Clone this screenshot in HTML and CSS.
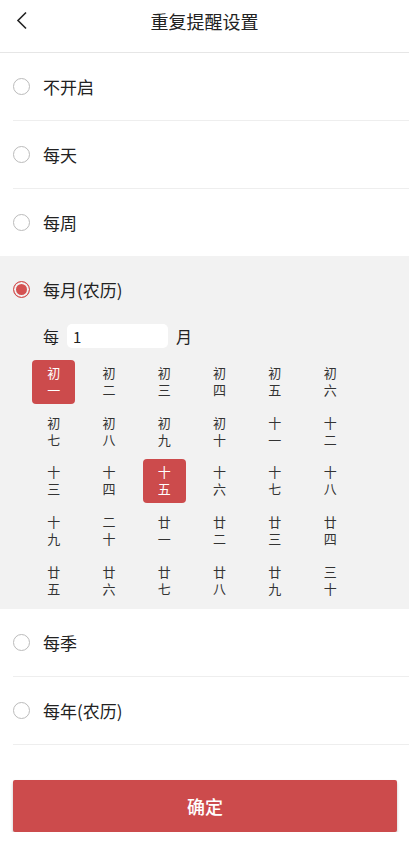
FILE: index.html
```html
<!DOCTYPE html>
<html lang="zh-CN">
<head>
    <meta charset="utf-8">
    <meta name="viewport" content="width=device-width, initial-scale=1">
    <title>重复提醒设置</title>
    <link rel="stylesheet" href="styles.css">
</head>
<body>
<header class="topbar">
    <a class="back" href="#">
        <svg width="14" height="20" viewBox="0 0 14 20"><path d="M10 1.5 L2 9.5 L10 17.5" fill="none" stroke="#222" stroke-width="1.6"/></svg>
    </a>
    <h1>重复提醒设置</h1>
</header>

<main>
    <ul class="options">
        <li class="opt"><span class="radio"></span>不开启</li>
        <li class="opt"><span class="radio"></span>每天</li>
        <li class="opt"><span class="radio"></span>每周</li>
        <li class="opt-open">
            <div class="opt"><span class="radio on"></span>每月(农历)</div>
            <div class="every">
                <span>每</span>
                <input class="num" value="1">
                <span>月</span>
            </div>
            <div class="days">
                <span class="day on"><i>初一</i></span>
                <span class="day"><i>初二</i></span>
                <span class="day"><i>初三</i></span>
                <span class="day"><i>初四</i></span>
                <span class="day"><i>初五</i></span>
                <span class="day"><i>初六</i></span>
                <span class="day"><i>初七</i></span>
                <span class="day"><i>初八</i></span>
                <span class="day"><i>初九</i></span>
                <span class="day"><i>初十</i></span>
                <span class="day"><i>十一</i></span>
                <span class="day"><i>十二</i></span>
                <span class="day"><i>十三</i></span>
                <span class="day"><i>十四</i></span>
                <span class="day on"><i>十五</i></span>
                <span class="day"><i>十六</i></span>
                <span class="day"><i>十七</i></span>
                <span class="day"><i>十八</i></span>
                <span class="day"><i>十九</i></span>
                <span class="day"><i>二十</i></span>
                <span class="day"><i>廿一</i></span>
                <span class="day"><i>廿二</i></span>
                <span class="day"><i>廿三</i></span>
                <span class="day"><i>廿四</i></span>
                <span class="day"><i>廿五</i></span>
                <span class="day"><i>廿六</i></span>
                <span class="day"><i>廿七</i></span>
                <span class="day"><i>廿八</i></span>
                <span class="day"><i>廿九</i></span>
                <span class="day"><i>三十</i></span>
            </div>
        </li>
        <li class="opt"><span class="radio"></span>每季</li>
        <li class="opt"><span class="radio"></span>每年(农历)</li>
    </ul>
    <div class="footer">
        <button class="btn">确定</button>
    </div>
</main>
</body>
</html>
```

FILE: styles.css
```css
* {
    margin: 0;
    padding: 0;
    box-sizing: border-box;
}

body {
    width: 409px;
    background: #fff;
    color: #222;
    font: normal 16px "Noto Sans CJK SC", "Noto Sans", sans-serif;
}

.topbar {
    height: 53px;
    display: flex;
    align-items: center;
    justify-content: center;
    border-bottom: 1px solid #e6e6e6;
    position: relative;
}

.back {
    position: absolute;
    left: 16px;
    top: 11px;
    display: flex;
}

h1 {
    font-size: 18px;
    font-weight: normal;
    color: #222;
    margin-top: -10px;
}

.options li {
    list-style: none;
}

.opt {
    height: 68px;
    display: flex;
    align-items: center;
    margin-left: 13px;
    border-bottom: 1px solid #eee;
    font-size: 17px;
}

.radio {
    width: 17px;
    height: 17px;
    border-radius: 50%;
    border: 1px solid #bbb;
    background: #fff;
    margin-right: 13px;
    flex-shrink: 0;
}

.radio.on {
    border: 1.5px solid #d45151;
    background: #d45151;
    box-shadow: inset 0 0 0 2px #f2f2f2;
}

.opt-open {
    background: #f2f2f2;
    margin-top: -1px;
    padding-bottom: 2px;
}

.opt-open .opt {
    border-bottom: none;
    height: 67px;
}

.every {
    display: flex;
    align-items: center;
    padding-left: 43px;
    height: 36px;
    margin-top: -5px;
}

.num {
    width: 101px;
    height: 24px;
    border: none;
    outline: none;
    border-radius: 5px;
    background: #fff;
    margin: 0 8px 0 8px;
    padding-left: 6px;
    font: 15px "Noto Sans CJK SC", sans-serif;
    color: #222;
}

.days {
    display: grid;
    grid-template-columns: repeat(6, 55.3px);
    grid-auto-rows: 49.8px;
    padding-left: 26px;
    margin-top: 3px;
    padding-bottom: 1px;
}

.day {
    width: 43px;
    height: 44px;
    justify-self: center;
    align-self: center;
    display: flex;
    align-items: center;
    justify-content: center;
    color: #333;
    border-radius: 4px;
}

.day i {
    font-style: normal;
    writing-mode: vertical-rl;
    font-size: 13px;
    letter-spacing: 4px;
    line-height: 13px;
    margin-bottom: -4px;
}

.day.on {
    background: #cc4b4c;
    color: #fff;
}

.footer {
    padding: 35px 12px 0 13px;
}

.btn {
    width: 100%;
    height: 52px;
    border: none;
    border-radius: 2px;
    background: #cc4b4c;
    color: #fff;
    font: 500 18px "Noto Sans CJK SC", sans-serif;
    box-shadow: 0 2px 3px rgba(0, 0, 0, .25);
}
```
